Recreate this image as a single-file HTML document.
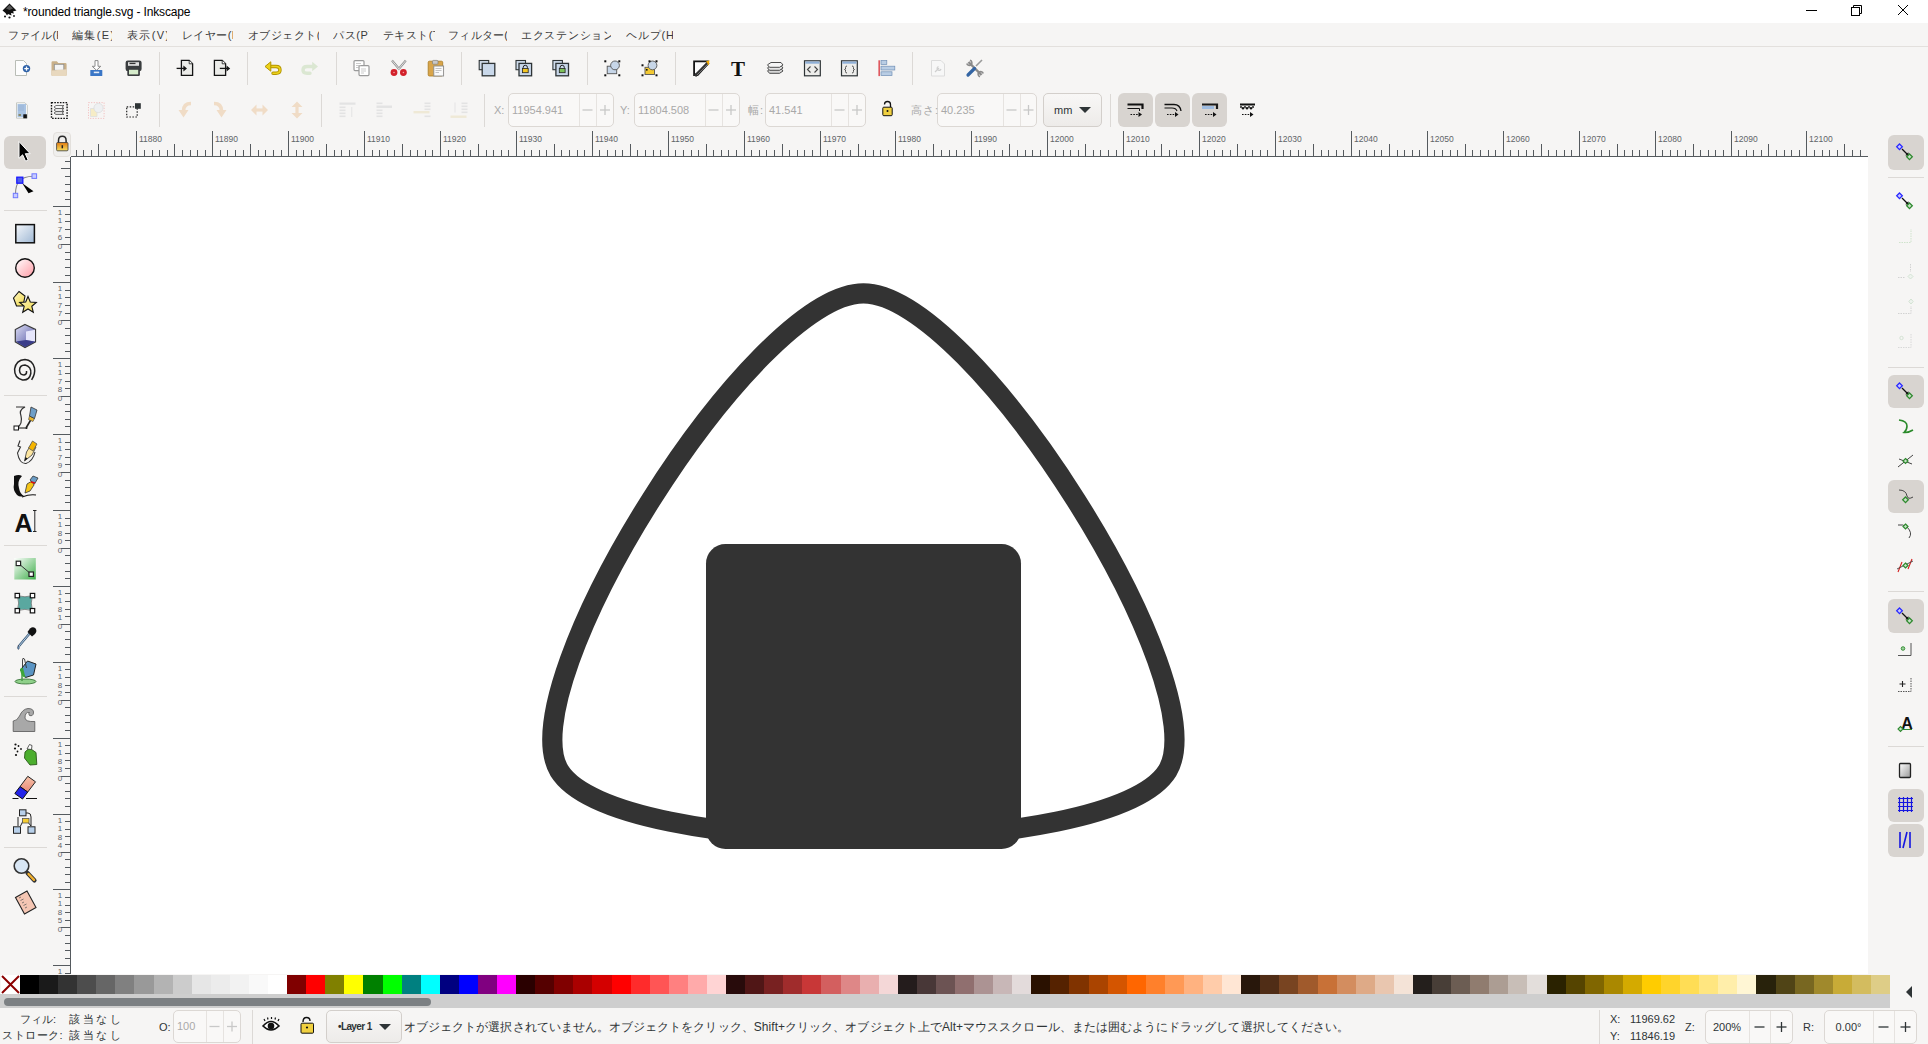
<!DOCTYPE html><html><head><meta charset="utf-8"><style>
*{margin:0;padding:0;box-sizing:border-box}
html,body{width:1928px;height:1044px;overflow:hidden;background:#f6f5f4;font-family:"Liberation Sans",sans-serif;color:#2e3436}
.a{position:absolute}
.sep{position:absolute;background:#dcd9d6}
.txt{position:absolute;white-space:nowrap;font-size:12px;line-height:14px}
.ent{position:absolute;border:1px solid #dcd8d4;border-radius:5px;background:#f9f8f7}
.btn{position:absolute;background:#d8d4d0;border-radius:6px}
svg{position:absolute;overflow:visible}
</style></head><body>

<div class="a" style="left:0;top:0;width:1928px;height:23px;background:#fff"></div>
<div class="txt" style="left:23px;top:5px;font-size:12px;letter-spacing:-0.15px;color:#000">*rounded triangle.svg - Inkscape</div>
<svg style="left:0;top:0" width="1928" height="23"><g stroke="#000" stroke-width="1" fill="none"><line x1="1806" y1="10.5" x2="1817" y2="10.5"/><rect x="1851.5" y="7.5" width="8" height="8"/><path d="M1853.5 7.5V5.5H1861.5V13.5H1859.5"/><path d="M1898 5L1908 15M1908 5L1898 15"/></g></svg>
<div class="a" style="left:0;top:46px;width:1928px;height:1px;background:#e3e0dd"></div>
<div class="txt" style="left:8px;top:28px;font-size:11px;letter-spacing:0.14px;color:#3a3a3a;overflow:hidden;width:50px">ファイル(F)</div>
<div class="txt" style="left:72px;top:28px;font-size:11px;letter-spacing:1.40px;color:#3a3a3a;overflow:hidden;width:40px">編集(E)</div>
<div class="txt" style="left:127px;top:28px;font-size:11px;letter-spacing:1.40px;color:#3a3a3a;overflow:hidden;width:40px">表示(V)</div>
<div class="txt" style="left:182px;top:28px;font-size:11px;letter-spacing:0.43px;color:#3a3a3a;overflow:hidden;width:51px">レイヤー(L)</div>
<div class="txt" style="left:248px;top:28px;font-size:11px;letter-spacing:0.44px;color:#3a3a3a;overflow:hidden;width:71px">オブジェクト(O)</div>
<div class="txt" style="left:333px;top:28px;font-size:11px;letter-spacing:0.60px;color:#3a3a3a;overflow:hidden;width:36px">パス(P)</div>
<div class="txt" style="left:383px;top:28px;font-size:11px;letter-spacing:0.43px;color:#3a3a3a;overflow:hidden;width:52px">テキスト(T)</div>
<div class="txt" style="left:448px;top:28px;font-size:11px;letter-spacing:0.25px;color:#3a3a3a;overflow:hidden;width:59px">フィルター(S)</div>
<div class="txt" style="left:521px;top:28px;font-size:11px;letter-spacing:0.73px;color:#3a3a3a;overflow:hidden;width:90px">エクステンション(N)</div>
<div class="txt" style="left:626px;top:28px;font-size:11px;letter-spacing:0.83px;color:#3a3a3a;overflow:hidden;width:47px">ヘルプ(H)</div>
<div class="sep" style="left:159px;top:52px;width:1px;height:33px"></div>
<div class="sep" style="left:247px;top:52px;width:1px;height:33px"></div>
<div class="sep" style="left:336px;top:52px;width:1px;height:33px"></div>
<div class="sep" style="left:461px;top:52px;width:1px;height:33px"></div>
<div class="sep" style="left:587px;top:52px;width:1px;height:33px"></div>
<div class="sep" style="left:675px;top:52px;width:1px;height:33px"></div>
<div class="sep" style="left:912px;top:52px;width:1px;height:33px"></div>
<div class="sep" style="left:159px;top:94px;width:1px;height:33px"></div>
<div class="sep" style="left:321px;top:94px;width:1px;height:33px"></div>
<div class="sep" style="left:484px;top:94px;width:1px;height:33px"></div>
<div class="sep" style="left:1110px;top:94px;width:1px;height:33px"></div>
<div class="ent" style="left:508px;top:93px;width:106px;height:34px"></div>
<div class="a" style="left:579px;top:94px;width:1px;height:32px;background:#e6e3e0"></div>
<div class="a" style="left:596px;top:94px;width:1px;height:32px;background:#e6e3e0"></div>
<div class="txt" style="left:512px;top:103px;font-size:11px;color:#a9a9a9">11954.941</div>
<svg style="left:0;top:0" width="1" height="1"><g stroke="#c8c8c8" stroke-width="1.3"><line x1="582.5" y1="110.0" x2="592.5" y2="110.0"/><line x1="600.0" y1="110.0" x2="610.0" y2="110.0"/><line x1="605.0" y1="105.0" x2="605.0" y2="115.0"/></g></svg>
<div class="ent" style="left:634px;top:93px;width:106px;height:34px"></div>
<div class="a" style="left:705px;top:94px;width:1px;height:32px;background:#e6e3e0"></div>
<div class="a" style="left:722px;top:94px;width:1px;height:32px;background:#e6e3e0"></div>
<div class="txt" style="left:638px;top:103px;font-size:11px;color:#a9a9a9">11804.508</div>
<svg style="left:0;top:0" width="1" height="1"><g stroke="#c8c8c8" stroke-width="1.3"><line x1="708.5" y1="110.0" x2="718.5" y2="110.0"/><line x1="726.0" y1="110.0" x2="736.0" y2="110.0"/><line x1="731.0" y1="105.0" x2="731.0" y2="115.0"/></g></svg>
<div class="ent" style="left:765px;top:93px;width:101px;height:34px"></div>
<div class="a" style="left:831px;top:94px;width:1px;height:32px;background:#e6e3e0"></div>
<div class="a" style="left:848px;top:94px;width:1px;height:32px;background:#e6e3e0"></div>
<div class="txt" style="left:769px;top:103px;font-size:11px;color:#a9a9a9">41.541</div>
<svg style="left:0;top:0" width="1" height="1"><g stroke="#c8c8c8" stroke-width="1.3"><line x1="834.5" y1="110.0" x2="844.5" y2="110.0"/><line x1="852.0" y1="110.0" x2="862.0" y2="110.0"/><line x1="857.0" y1="105.0" x2="857.0" y2="115.0"/></g></svg>
<div class="ent" style="left:937px;top:93px;width:100px;height:34px"></div>
<div class="a" style="left:1003px;top:94px;width:1px;height:32px;background:#e6e3e0"></div>
<div class="a" style="left:1020px;top:94px;width:1px;height:32px;background:#e6e3e0"></div>
<div class="txt" style="left:941px;top:103px;font-size:11px;color:#a9a9a9">40.235</div>
<svg style="left:0;top:0" width="1" height="1"><g stroke="#c8c8c8" stroke-width="1.3"><line x1="1006.5" y1="110.0" x2="1016.5" y2="110.0"/><line x1="1023.5" y1="110.0" x2="1033.5" y2="110.0"/><line x1="1028.5" y1="105.0" x2="1028.5" y2="115.0"/></g></svg>
<div class="txt" style="left:494px;top:103px;font-size:11px;color:#a9a9a9">X:</div>
<div class="txt" style="left:620px;top:103px;font-size:11px;color:#a9a9a9">Y:</div>
<div class="txt" style="left:748px;top:103px;font-size:11px;letter-spacing:1px;color:#a9a9a9">幅:</div>
<div class="txt" style="left:911px;top:103px;font-size:11px;letter-spacing:1px;color:#a9a9a9">高さ:</div>
<div class="a" style="left:1043px;top:93px;width:59px;height:34px;border:1px solid #d3cfcb;border-radius:5px;background:linear-gradient(#f8f7f6,#edebe9)"></div>
<div class="txt" style="left:1054px;top:103px;font-size:11px;color:#2e3436">mm</div>
<svg style="left:0;top:0" width="1" height="1"><path d="M1079 107H1091L1085 113Z" fill="#2e3436"/></svg>
<div class="btn" style="left:1118px;top:93px;width:35px;height:34px"></div>
<div class="btn" style="left:1155px;top:93px;width:35px;height:34px"></div>
<div class="btn" style="left:1192px;top:93px;width:35px;height:34px"></div>
<div class="a" style="left:71px;top:157px;width:1797px;height:817px;background:#fff"></div>
<svg style="left:0;top:0" width="1928" height="1044"><g stroke="#555a5e" stroke-width="1" shape-rendering="crispEdges"><line x1="71" y1="156.5" x2="1868" y2="156.5"/><line x1="70.5" y1="157" x2="70.5" y2="974"/><line x1="76.5" y1="150" x2="76.5" y2="157"/><line x1="83.5" y1="150" x2="83.5" y2="157"/><line x1="91.5" y1="150" x2="91.5" y2="157"/><line x1="98.5" y1="144" x2="98.5" y2="157"/><line x1="106.5" y1="150" x2="106.5" y2="157"/><line x1="114.5" y1="150" x2="114.5" y2="157"/><line x1="121.5" y1="150" x2="121.5" y2="157"/><line x1="129.5" y1="150" x2="129.5" y2="157"/><line x1="136.5" y1="131" x2="136.5" y2="157"/><line x1="144.5" y1="150" x2="144.5" y2="157"/><line x1="152.5" y1="150" x2="152.5" y2="157"/><line x1="159.5" y1="150" x2="159.5" y2="157"/><line x1="167.5" y1="150" x2="167.5" y2="157"/><line x1="174.5" y1="144" x2="174.5" y2="157"/><line x1="182.5" y1="150" x2="182.5" y2="157"/><line x1="190.5" y1="150" x2="190.5" y2="157"/><line x1="197.5" y1="150" x2="197.5" y2="157"/><line x1="205.5" y1="150" x2="205.5" y2="157"/><line x1="212.5" y1="131" x2="212.5" y2="157"/><line x1="220.5" y1="150" x2="220.5" y2="157"/><line x1="227.5" y1="150" x2="227.5" y2="157"/><line x1="235.5" y1="150" x2="235.5" y2="157"/><line x1="243.5" y1="150" x2="243.5" y2="157"/><line x1="250.5" y1="144" x2="250.5" y2="157"/><line x1="258.5" y1="150" x2="258.5" y2="157"/><line x1="265.5" y1="150" x2="265.5" y2="157"/><line x1="273.5" y1="150" x2="273.5" y2="157"/><line x1="281.5" y1="150" x2="281.5" y2="157"/><line x1="288.5" y1="131" x2="288.5" y2="157"/><line x1="296.5" y1="150" x2="296.5" y2="157"/><line x1="303.5" y1="150" x2="303.5" y2="157"/><line x1="311.5" y1="150" x2="311.5" y2="157"/><line x1="319.5" y1="150" x2="319.5" y2="157"/><line x1="326.5" y1="144" x2="326.5" y2="157"/><line x1="334.5" y1="150" x2="334.5" y2="157"/><line x1="341.5" y1="150" x2="341.5" y2="157"/><line x1="349.5" y1="150" x2="349.5" y2="157"/><line x1="357.5" y1="150" x2="357.5" y2="157"/><line x1="364.5" y1="131" x2="364.5" y2="157"/><line x1="372.5" y1="150" x2="372.5" y2="157"/><line x1="379.5" y1="150" x2="379.5" y2="157"/><line x1="387.5" y1="150" x2="387.5" y2="157"/><line x1="394.5" y1="150" x2="394.5" y2="157"/><line x1="402.5" y1="144" x2="402.5" y2="157"/><line x1="410.5" y1="150" x2="410.5" y2="157"/><line x1="417.5" y1="150" x2="417.5" y2="157"/><line x1="425.5" y1="150" x2="425.5" y2="157"/><line x1="432.5" y1="150" x2="432.5" y2="157"/><line x1="440.5" y1="131" x2="440.5" y2="157"/><line x1="448.5" y1="150" x2="448.5" y2="157"/><line x1="455.5" y1="150" x2="455.5" y2="157"/><line x1="463.5" y1="150" x2="463.5" y2="157"/><line x1="470.5" y1="150" x2="470.5" y2="157"/><line x1="478.5" y1="144" x2="478.5" y2="157"/><line x1="486.5" y1="150" x2="486.5" y2="157"/><line x1="493.5" y1="150" x2="493.5" y2="157"/><line x1="501.5" y1="150" x2="501.5" y2="157"/><line x1="508.5" y1="150" x2="508.5" y2="157"/><line x1="516.5" y1="131" x2="516.5" y2="157"/><line x1="524.5" y1="150" x2="524.5" y2="157"/><line x1="531.5" y1="150" x2="531.5" y2="157"/><line x1="539.5" y1="150" x2="539.5" y2="157"/><line x1="546.5" y1="150" x2="546.5" y2="157"/><line x1="554.5" y1="144" x2="554.5" y2="157"/><line x1="561.5" y1="150" x2="561.5" y2="157"/><line x1="569.5" y1="150" x2="569.5" y2="157"/><line x1="577.5" y1="150" x2="577.5" y2="157"/><line x1="584.5" y1="150" x2="584.5" y2="157"/><line x1="592.5" y1="131" x2="592.5" y2="157"/><line x1="599.5" y1="150" x2="599.5" y2="157"/><line x1="607.5" y1="150" x2="607.5" y2="157"/><line x1="615.5" y1="150" x2="615.5" y2="157"/><line x1="622.5" y1="150" x2="622.5" y2="157"/><line x1="630.5" y1="144" x2="630.5" y2="157"/><line x1="637.5" y1="150" x2="637.5" y2="157"/><line x1="645.5" y1="150" x2="645.5" y2="157"/><line x1="653.5" y1="150" x2="653.5" y2="157"/><line x1="660.5" y1="150" x2="660.5" y2="157"/><line x1="668.5" y1="131" x2="668.5" y2="157"/><line x1="675.5" y1="150" x2="675.5" y2="157"/><line x1="683.5" y1="150" x2="683.5" y2="157"/><line x1="691.5" y1="150" x2="691.5" y2="157"/><line x1="698.5" y1="150" x2="698.5" y2="157"/><line x1="706.5" y1="144" x2="706.5" y2="157"/><line x1="713.5" y1="150" x2="713.5" y2="157"/><line x1="721.5" y1="150" x2="721.5" y2="157"/><line x1="728.5" y1="150" x2="728.5" y2="157"/><line x1="736.5" y1="150" x2="736.5" y2="157"/><line x1="744.5" y1="131" x2="744.5" y2="157"/><line x1="751.5" y1="150" x2="751.5" y2="157"/><line x1="759.5" y1="150" x2="759.5" y2="157"/><line x1="766.5" y1="150" x2="766.5" y2="157"/><line x1="774.5" y1="150" x2="774.5" y2="157"/><line x1="782.5" y1="144" x2="782.5" y2="157"/><line x1="789.5" y1="150" x2="789.5" y2="157"/><line x1="797.5" y1="150" x2="797.5" y2="157"/><line x1="804.5" y1="150" x2="804.5" y2="157"/><line x1="812.5" y1="150" x2="812.5" y2="157"/><line x1="820.5" y1="131" x2="820.5" y2="157"/><line x1="827.5" y1="150" x2="827.5" y2="157"/><line x1="835.5" y1="150" x2="835.5" y2="157"/><line x1="842.5" y1="150" x2="842.5" y2="157"/><line x1="850.5" y1="150" x2="850.5" y2="157"/><line x1="858.5" y1="144" x2="858.5" y2="157"/><line x1="865.5" y1="150" x2="865.5" y2="157"/><line x1="873.5" y1="150" x2="873.5" y2="157"/><line x1="880.5" y1="150" x2="880.5" y2="157"/><line x1="888.5" y1="150" x2="888.5" y2="157"/><line x1="895.5" y1="131" x2="895.5" y2="157"/><line x1="903.5" y1="150" x2="903.5" y2="157"/><line x1="911.5" y1="150" x2="911.5" y2="157"/><line x1="918.5" y1="150" x2="918.5" y2="157"/><line x1="926.5" y1="150" x2="926.5" y2="157"/><line x1="933.5" y1="144" x2="933.5" y2="157"/><line x1="941.5" y1="150" x2="941.5" y2="157"/><line x1="949.5" y1="150" x2="949.5" y2="157"/><line x1="956.5" y1="150" x2="956.5" y2="157"/><line x1="964.5" y1="150" x2="964.5" y2="157"/><line x1="971.5" y1="131" x2="971.5" y2="157"/><line x1="979.5" y1="150" x2="979.5" y2="157"/><line x1="987.5" y1="150" x2="987.5" y2="157"/><line x1="994.5" y1="150" x2="994.5" y2="157"/><line x1="1002.5" y1="150" x2="1002.5" y2="157"/><line x1="1009.5" y1="144" x2="1009.5" y2="157"/><line x1="1017.5" y1="150" x2="1017.5" y2="157"/><line x1="1025.5" y1="150" x2="1025.5" y2="157"/><line x1="1032.5" y1="150" x2="1032.5" y2="157"/><line x1="1040.5" y1="150" x2="1040.5" y2="157"/><line x1="1047.5" y1="131" x2="1047.5" y2="157"/><line x1="1055.5" y1="150" x2="1055.5" y2="157"/><line x1="1063.5" y1="150" x2="1063.5" y2="157"/><line x1="1070.5" y1="150" x2="1070.5" y2="157"/><line x1="1078.5" y1="150" x2="1078.5" y2="157"/><line x1="1085.5" y1="144" x2="1085.5" y2="157"/><line x1="1093.5" y1="150" x2="1093.5" y2="157"/><line x1="1100.5" y1="150" x2="1100.5" y2="157"/><line x1="1108.5" y1="150" x2="1108.5" y2="157"/><line x1="1116.5" y1="150" x2="1116.5" y2="157"/><line x1="1123.5" y1="131" x2="1123.5" y2="157"/><line x1="1131.5" y1="150" x2="1131.5" y2="157"/><line x1="1138.5" y1="150" x2="1138.5" y2="157"/><line x1="1146.5" y1="150" x2="1146.5" y2="157"/><line x1="1154.5" y1="150" x2="1154.5" y2="157"/><line x1="1161.5" y1="144" x2="1161.5" y2="157"/><line x1="1169.5" y1="150" x2="1169.5" y2="157"/><line x1="1176.5" y1="150" x2="1176.5" y2="157"/><line x1="1184.5" y1="150" x2="1184.5" y2="157"/><line x1="1192.5" y1="150" x2="1192.5" y2="157"/><line x1="1199.5" y1="131" x2="1199.5" y2="157"/><line x1="1207.5" y1="150" x2="1207.5" y2="157"/><line x1="1214.5" y1="150" x2="1214.5" y2="157"/><line x1="1222.5" y1="150" x2="1222.5" y2="157"/><line x1="1230.5" y1="150" x2="1230.5" y2="157"/><line x1="1237.5" y1="144" x2="1237.5" y2="157"/><line x1="1245.5" y1="150" x2="1245.5" y2="157"/><line x1="1252.5" y1="150" x2="1252.5" y2="157"/><line x1="1260.5" y1="150" x2="1260.5" y2="157"/><line x1="1267.5" y1="150" x2="1267.5" y2="157"/><line x1="1275.5" y1="131" x2="1275.5" y2="157"/><line x1="1283.5" y1="150" x2="1283.5" y2="157"/><line x1="1290.5" y1="150" x2="1290.5" y2="157"/><line x1="1298.5" y1="150" x2="1298.5" y2="157"/><line x1="1305.5" y1="150" x2="1305.5" y2="157"/><line x1="1313.5" y1="144" x2="1313.5" y2="157"/><line x1="1321.5" y1="150" x2="1321.5" y2="157"/><line x1="1328.5" y1="150" x2="1328.5" y2="157"/><line x1="1336.5" y1="150" x2="1336.5" y2="157"/><line x1="1343.5" y1="150" x2="1343.5" y2="157"/><line x1="1351.5" y1="131" x2="1351.5" y2="157"/><line x1="1359.5" y1="150" x2="1359.5" y2="157"/><line x1="1366.5" y1="150" x2="1366.5" y2="157"/><line x1="1374.5" y1="150" x2="1374.5" y2="157"/><line x1="1381.5" y1="150" x2="1381.5" y2="157"/><line x1="1389.5" y1="144" x2="1389.5" y2="157"/><line x1="1397.5" y1="150" x2="1397.5" y2="157"/><line x1="1404.5" y1="150" x2="1404.5" y2="157"/><line x1="1412.5" y1="150" x2="1412.5" y2="157"/><line x1="1419.5" y1="150" x2="1419.5" y2="157"/><line x1="1427.5" y1="131" x2="1427.5" y2="157"/><line x1="1434.5" y1="150" x2="1434.5" y2="157"/><line x1="1442.5" y1="150" x2="1442.5" y2="157"/><line x1="1450.5" y1="150" x2="1450.5" y2="157"/><line x1="1457.5" y1="150" x2="1457.5" y2="157"/><line x1="1465.5" y1="144" x2="1465.5" y2="157"/><line x1="1472.5" y1="150" x2="1472.5" y2="157"/><line x1="1480.5" y1="150" x2="1480.5" y2="157"/><line x1="1488.5" y1="150" x2="1488.5" y2="157"/><line x1="1495.5" y1="150" x2="1495.5" y2="157"/><line x1="1503.5" y1="131" x2="1503.5" y2="157"/><line x1="1510.5" y1="150" x2="1510.5" y2="157"/><line x1="1518.5" y1="150" x2="1518.5" y2="157"/><line x1="1526.5" y1="150" x2="1526.5" y2="157"/><line x1="1533.5" y1="150" x2="1533.5" y2="157"/><line x1="1541.5" y1="144" x2="1541.5" y2="157"/><line x1="1548.5" y1="150" x2="1548.5" y2="157"/><line x1="1556.5" y1="150" x2="1556.5" y2="157"/><line x1="1564.5" y1="150" x2="1564.5" y2="157"/><line x1="1571.5" y1="150" x2="1571.5" y2="157"/><line x1="1579.5" y1="131" x2="1579.5" y2="157"/><line x1="1586.5" y1="150" x2="1586.5" y2="157"/><line x1="1594.5" y1="150" x2="1594.5" y2="157"/><line x1="1601.5" y1="150" x2="1601.5" y2="157"/><line x1="1609.5" y1="150" x2="1609.5" y2="157"/><line x1="1617.5" y1="144" x2="1617.5" y2="157"/><line x1="1624.5" y1="150" x2="1624.5" y2="157"/><line x1="1632.5" y1="150" x2="1632.5" y2="157"/><line x1="1639.5" y1="150" x2="1639.5" y2="157"/><line x1="1647.5" y1="150" x2="1647.5" y2="157"/><line x1="1655.5" y1="131" x2="1655.5" y2="157"/><line x1="1662.5" y1="150" x2="1662.5" y2="157"/><line x1="1670.5" y1="150" x2="1670.5" y2="157"/><line x1="1677.5" y1="150" x2="1677.5" y2="157"/><line x1="1685.5" y1="150" x2="1685.5" y2="157"/><line x1="1693.5" y1="144" x2="1693.5" y2="157"/><line x1="1700.5" y1="150" x2="1700.5" y2="157"/><line x1="1708.5" y1="150" x2="1708.5" y2="157"/><line x1="1715.5" y1="150" x2="1715.5" y2="157"/><line x1="1723.5" y1="150" x2="1723.5" y2="157"/><line x1="1731.5" y1="131" x2="1731.5" y2="157"/><line x1="1738.5" y1="150" x2="1738.5" y2="157"/><line x1="1746.5" y1="150" x2="1746.5" y2="157"/><line x1="1753.5" y1="150" x2="1753.5" y2="157"/><line x1="1761.5" y1="150" x2="1761.5" y2="157"/><line x1="1768.5" y1="144" x2="1768.5" y2="157"/><line x1="1776.5" y1="150" x2="1776.5" y2="157"/><line x1="1784.5" y1="150" x2="1784.5" y2="157"/><line x1="1791.5" y1="150" x2="1791.5" y2="157"/><line x1="1799.5" y1="150" x2="1799.5" y2="157"/><line x1="1806.5" y1="131" x2="1806.5" y2="157"/><line x1="1814.5" y1="150" x2="1814.5" y2="157"/><line x1="1822.5" y1="150" x2="1822.5" y2="157"/><line x1="1829.5" y1="150" x2="1829.5" y2="157"/><line x1="1837.5" y1="150" x2="1837.5" y2="157"/><line x1="1844.5" y1="144" x2="1844.5" y2="157"/><line x1="1852.5" y1="150" x2="1852.5" y2="157"/><line x1="1860.5" y1="150" x2="1860.5" y2="157"/><line x1="65" y1="161.5" x2="71" y2="161.5"/><line x1="61" y1="168.5" x2="71" y2="168.5"/><line x1="65" y1="176.5" x2="71" y2="176.5"/><line x1="65" y1="184.5" x2="71" y2="184.5"/><line x1="65" y1="191.5" x2="71" y2="191.5"/><line x1="65" y1="199.5" x2="71" y2="199.5"/><line x1="53" y1="206.5" x2="71" y2="206.5"/><line x1="65" y1="214.5" x2="71" y2="214.5"/><line x1="65" y1="221.5" x2="71" y2="221.5"/><line x1="65" y1="229.5" x2="71" y2="229.5"/><line x1="65" y1="237.5" x2="71" y2="237.5"/><line x1="61" y1="244.5" x2="71" y2="244.5"/><line x1="65" y1="252.5" x2="71" y2="252.5"/><line x1="65" y1="259.5" x2="71" y2="259.5"/><line x1="65" y1="267.5" x2="71" y2="267.5"/><line x1="65" y1="275.5" x2="71" y2="275.5"/><line x1="53" y1="282.5" x2="71" y2="282.5"/><line x1="65" y1="290.5" x2="71" y2="290.5"/><line x1="65" y1="297.5" x2="71" y2="297.5"/><line x1="65" y1="305.5" x2="71" y2="305.5"/><line x1="65" y1="313.5" x2="71" y2="313.5"/><line x1="61" y1="320.5" x2="71" y2="320.5"/><line x1="65" y1="328.5" x2="71" y2="328.5"/><line x1="65" y1="335.5" x2="71" y2="335.5"/><line x1="65" y1="343.5" x2="71" y2="343.5"/><line x1="65" y1="351.5" x2="71" y2="351.5"/><line x1="53" y1="358.5" x2="71" y2="358.5"/><line x1="65" y1="366.5" x2="71" y2="366.5"/><line x1="65" y1="373.5" x2="71" y2="373.5"/><line x1="65" y1="381.5" x2="71" y2="381.5"/><line x1="65" y1="388.5" x2="71" y2="388.5"/><line x1="61" y1="396.5" x2="71" y2="396.5"/><line x1="65" y1="404.5" x2="71" y2="404.5"/><line x1="65" y1="411.5" x2="71" y2="411.5"/><line x1="65" y1="419.5" x2="71" y2="419.5"/><line x1="65" y1="426.5" x2="71" y2="426.5"/><line x1="53" y1="434.5" x2="71" y2="434.5"/><line x1="65" y1="442.5" x2="71" y2="442.5"/><line x1="65" y1="449.5" x2="71" y2="449.5"/><line x1="65" y1="457.5" x2="71" y2="457.5"/><line x1="65" y1="464.5" x2="71" y2="464.5"/><line x1="61" y1="472.5" x2="71" y2="472.5"/><line x1="65" y1="480.5" x2="71" y2="480.5"/><line x1="65" y1="487.5" x2="71" y2="487.5"/><line x1="65" y1="495.5" x2="71" y2="495.5"/><line x1="65" y1="502.5" x2="71" y2="502.5"/><line x1="53" y1="510.5" x2="71" y2="510.5"/><line x1="65" y1="518.5" x2="71" y2="518.5"/><line x1="65" y1="525.5" x2="71" y2="525.5"/><line x1="65" y1="533.5" x2="71" y2="533.5"/><line x1="65" y1="540.5" x2="71" y2="540.5"/><line x1="61" y1="548.5" x2="71" y2="548.5"/><line x1="65" y1="555.5" x2="71" y2="555.5"/><line x1="65" y1="563.5" x2="71" y2="563.5"/><line x1="65" y1="571.5" x2="71" y2="571.5"/><line x1="65" y1="578.5" x2="71" y2="578.5"/><line x1="53" y1="586.5" x2="71" y2="586.5"/><line x1="65" y1="593.5" x2="71" y2="593.5"/><line x1="65" y1="601.5" x2="71" y2="601.5"/><line x1="65" y1="609.5" x2="71" y2="609.5"/><line x1="65" y1="616.5" x2="71" y2="616.5"/><line x1="61" y1="624.5" x2="71" y2="624.5"/><line x1="65" y1="631.5" x2="71" y2="631.5"/><line x1="65" y1="639.5" x2="71" y2="639.5"/><line x1="65" y1="647.5" x2="71" y2="647.5"/><line x1="65" y1="654.5" x2="71" y2="654.5"/><line x1="53" y1="662.5" x2="71" y2="662.5"/><line x1="65" y1="669.5" x2="71" y2="669.5"/><line x1="65" y1="677.5" x2="71" y2="677.5"/><line x1="65" y1="685.5" x2="71" y2="685.5"/><line x1="65" y1="692.5" x2="71" y2="692.5"/><line x1="61" y1="700.5" x2="71" y2="700.5"/><line x1="65" y1="707.5" x2="71" y2="707.5"/><line x1="65" y1="715.5" x2="71" y2="715.5"/><line x1="65" y1="722.5" x2="71" y2="722.5"/><line x1="65" y1="730.5" x2="71" y2="730.5"/><line x1="53" y1="738.5" x2="71" y2="738.5"/><line x1="65" y1="745.5" x2="71" y2="745.5"/><line x1="65" y1="753.5" x2="71" y2="753.5"/><line x1="65" y1="760.5" x2="71" y2="760.5"/><line x1="65" y1="768.5" x2="71" y2="768.5"/><line x1="61" y1="776.5" x2="71" y2="776.5"/><line x1="65" y1="783.5" x2="71" y2="783.5"/><line x1="65" y1="791.5" x2="71" y2="791.5"/><line x1="65" y1="798.5" x2="71" y2="798.5"/><line x1="65" y1="806.5" x2="71" y2="806.5"/><line x1="53" y1="814.5" x2="71" y2="814.5"/><line x1="65" y1="821.5" x2="71" y2="821.5"/><line x1="65" y1="829.5" x2="71" y2="829.5"/><line x1="65" y1="836.5" x2="71" y2="836.5"/><line x1="65" y1="844.5" x2="71" y2="844.5"/><line x1="61" y1="852.5" x2="71" y2="852.5"/><line x1="65" y1="859.5" x2="71" y2="859.5"/><line x1="65" y1="867.5" x2="71" y2="867.5"/><line x1="65" y1="874.5" x2="71" y2="874.5"/><line x1="65" y1="882.5" x2="71" y2="882.5"/><line x1="53" y1="889.5" x2="71" y2="889.5"/><line x1="65" y1="897.5" x2="71" y2="897.5"/><line x1="65" y1="905.5" x2="71" y2="905.5"/><line x1="65" y1="912.5" x2="71" y2="912.5"/><line x1="65" y1="920.5" x2="71" y2="920.5"/><line x1="61" y1="927.5" x2="71" y2="927.5"/><line x1="65" y1="935.5" x2="71" y2="935.5"/><line x1="65" y1="943.5" x2="71" y2="943.5"/><line x1="65" y1="950.5" x2="71" y2="950.5"/><line x1="65" y1="958.5" x2="71" y2="958.5"/><line x1="53" y1="965.5" x2="71" y2="965.5"/><line x1="65" y1="973.5" x2="71" y2="973.5"/></g><defs><clipPath id="lrc"><rect x="0" y="158" width="80" height="816"/></clipPath></defs><g font-family="Liberation Sans" font-size="8.5" fill="#5f6468"><text x="139.0" y="141.5">11880</text><text x="215.0" y="141.5">11890</text><text x="291.0" y="141.5">11900</text><text x="367.0" y="141.5">11910</text><text x="443.0" y="141.5">11920</text><text x="519.0" y="141.5">11930</text><text x="595.0" y="141.5">11940</text><text x="671.0" y="141.5">11950</text><text x="747.0" y="141.5">11960</text><text x="823.0" y="141.5">11970</text><text x="898.0" y="141.5">11980</text><text x="974.0" y="141.5">11990</text><text x="1050.0" y="141.5">12000</text><text x="1126.0" y="141.5">12010</text><text x="1202.0" y="141.5">12020</text><text x="1278.0" y="141.5">12030</text><text x="1354.0" y="141.5">12040</text><text x="1430.0" y="141.5">12050</text><text x="1506.0" y="141.5">12060</text><text x="1582.0" y="141.5">12070</text><text x="1658.0" y="141.5">12080</text><text x="1734.0" y="141.5">12090</text><text x="1809.0" y="141.5">12100</text></g><g font-family="Liberation Sans" font-size="8.5" fill="#5f6468" clip-path="url(#lrc)"><text x="60" y="214.5" text-anchor="middle" font-size="8">1</text><text x="60" y="223.1" text-anchor="middle" font-size="8">1</text><text x="60" y="231.7" text-anchor="middle" font-size="8">7</text><text x="60" y="240.3" text-anchor="middle" font-size="8">6</text><text x="60" y="248.9" text-anchor="middle" font-size="8">0</text><text x="60" y="290.5" text-anchor="middle" font-size="8">1</text><text x="60" y="299.1" text-anchor="middle" font-size="8">1</text><text x="60" y="307.7" text-anchor="middle" font-size="8">7</text><text x="60" y="316.3" text-anchor="middle" font-size="8">7</text><text x="60" y="324.9" text-anchor="middle" font-size="8">0</text><text x="60" y="366.5" text-anchor="middle" font-size="8">1</text><text x="60" y="375.1" text-anchor="middle" font-size="8">1</text><text x="60" y="383.7" text-anchor="middle" font-size="8">7</text><text x="60" y="392.3" text-anchor="middle" font-size="8">8</text><text x="60" y="400.9" text-anchor="middle" font-size="8">0</text><text x="60" y="442.5" text-anchor="middle" font-size="8">1</text><text x="60" y="451.1" text-anchor="middle" font-size="8">1</text><text x="60" y="459.7" text-anchor="middle" font-size="8">7</text><text x="60" y="468.3" text-anchor="middle" font-size="8">9</text><text x="60" y="476.9" text-anchor="middle" font-size="8">0</text><text x="60" y="518.5" text-anchor="middle" font-size="8">1</text><text x="60" y="527.1" text-anchor="middle" font-size="8">1</text><text x="60" y="535.7" text-anchor="middle" font-size="8">8</text><text x="60" y="544.3" text-anchor="middle" font-size="8">0</text><text x="60" y="552.9" text-anchor="middle" font-size="8">0</text><text x="60" y="594.5" text-anchor="middle" font-size="8">1</text><text x="60" y="603.1" text-anchor="middle" font-size="8">1</text><text x="60" y="611.7" text-anchor="middle" font-size="8">8</text><text x="60" y="620.3" text-anchor="middle" font-size="8">1</text><text x="60" y="628.9" text-anchor="middle" font-size="8">0</text><text x="60" y="670.5" text-anchor="middle" font-size="8">1</text><text x="60" y="679.1" text-anchor="middle" font-size="8">1</text><text x="60" y="687.7" text-anchor="middle" font-size="8">8</text><text x="60" y="696.3" text-anchor="middle" font-size="8">2</text><text x="60" y="704.9" text-anchor="middle" font-size="8">0</text><text x="60" y="746.5" text-anchor="middle" font-size="8">1</text><text x="60" y="755.1" text-anchor="middle" font-size="8">1</text><text x="60" y="763.7" text-anchor="middle" font-size="8">8</text><text x="60" y="772.3" text-anchor="middle" font-size="8">3</text><text x="60" y="780.9" text-anchor="middle" font-size="8">0</text><text x="60" y="822.5" text-anchor="middle" font-size="8">1</text><text x="60" y="831.1" text-anchor="middle" font-size="8">1</text><text x="60" y="839.7" text-anchor="middle" font-size="8">8</text><text x="60" y="848.3" text-anchor="middle" font-size="8">4</text><text x="60" y="856.9" text-anchor="middle" font-size="8">0</text><text x="60" y="897.5" text-anchor="middle" font-size="8">1</text><text x="60" y="906.1" text-anchor="middle" font-size="8">1</text><text x="60" y="914.7" text-anchor="middle" font-size="8">8</text><text x="60" y="923.3" text-anchor="middle" font-size="8">5</text><text x="60" y="931.9" text-anchor="middle" font-size="8">0</text><text x="60" y="973.5" text-anchor="middle" font-size="8">1</text><text x="60" y="982.1" text-anchor="middle" font-size="8">1</text><text x="60" y="990.7" text-anchor="middle" font-size="8">8</text><text x="60" y="999.3" text-anchor="middle" font-size="8">6</text><text x="60" y="1007.9" text-anchor="middle" font-size="8">0</text></g></svg>
<svg style="left:0;top:0" width="1928" height="1044"><path d="M863.4 293.36C753.44 293.36 508.04 685.43 559.28 770.77C614.96 861.2 1111.84 861.2 1167.52 770.77C1218.76 685.43 973.36 293.36 863.4 293.36Z" fill="none" stroke="#333" stroke-width="20.2"/><rect x="706" y="544" width="315" height="305" rx="19.5" fill="#333"/></svg>
<div class="btn" style="left:4px;top:136px;width:42px;height:33px"></div>
<div class="sep" style="left:4px;top:210px;width:43px;height:1px"></div>
<div class="sep" style="left:4px;top:395px;width:43px;height:1px"></div>
<div class="sep" style="left:4px;top:545px;width:43px;height:1px"></div>
<div class="sep" style="left:4px;top:696px;width:43px;height:1px"></div>
<div class="sep" style="left:4px;top:847px;width:43px;height:1px"></div>
<div class="a" style="left:53px;top:132px;width:18px;height:25px;border:1px solid #e3e0dc;border-radius:4px;background:#f0efed"></div>
<div class="btn" style="left:1888px;top:135px;width:36px;height:35px"></div>
<div class="btn" style="left:1888px;top:375px;width:36px;height:33px"></div>
<div class="btn" style="left:1888px;top:480px;width:36px;height:33px"></div>
<div class="btn" style="left:1888px;top:599px;width:36px;height:34px"></div>
<div class="btn" style="left:1888px;top:789px;width:36px;height:33px"></div>
<div class="btn" style="left:1888px;top:824px;width:36px;height:33px"></div>
<div class="sep" style="left:1888px;top:177px;width:36px;height:1px"></div>
<div class="sep" style="left:1888px;top:367px;width:36px;height:1px"></div>
<div class="sep" style="left:1888px;top:591px;width:36px;height:1px"></div>
<div class="sep" style="left:1888px;top:746px;width:36px;height:1px"></div>
<svg style="left:0;top:0" width="1928" height="1044" shape-rendering="crispEdges"><rect x="1" y="975" width="19" height="19" fill="#fff"/><path d="M2 976L19 993M19 976L2 993" stroke="#8b0000" stroke-width="2" shape-rendering="auto"/><rect x="20" y="975" width="19" height="19" fill="#000000"/><rect x="39" y="975" width="19" height="19" fill="#1a1a1a"/><rect x="58" y="975" width="19" height="19" fill="#333333"/><rect x="77" y="975" width="19" height="19" fill="#4d4d4d"/><rect x="96" y="975" width="19" height="19" fill="#666666"/><rect x="115" y="975" width="19" height="19" fill="#808080"/><rect x="134" y="975" width="20" height="19" fill="#999999"/><rect x="154" y="975" width="19" height="19" fill="#b3b3b3"/><rect x="173" y="975" width="19" height="19" fill="#cccccc"/><rect x="192" y="975" width="19" height="19" fill="#e6e6e6"/><rect x="211" y="975" width="19" height="19" fill="#ececec"/><rect x="230" y="975" width="19" height="19" fill="#f2f2f2"/><rect x="249" y="975" width="19" height="19" fill="#f9f9f9"/><rect x="268" y="975" width="19" height="19" fill="#ffffff"/><rect x="287" y="975" width="19" height="19" fill="#800000"/><rect x="306" y="975" width="19" height="19" fill="#ff0000"/><rect x="325" y="975" width="19" height="19" fill="#808000"/><rect x="344" y="975" width="19" height="19" fill="#ffff00"/><rect x="363" y="975" width="20" height="19" fill="#008000"/><rect x="383" y="975" width="19" height="19" fill="#00ff00"/><rect x="402" y="975" width="19" height="19" fill="#008080"/><rect x="421" y="975" width="19" height="19" fill="#00ffff"/><rect x="440" y="975" width="19" height="19" fill="#000080"/><rect x="459" y="975" width="19" height="19" fill="#0000ff"/><rect x="478" y="975" width="19" height="19" fill="#800080"/><rect x="497" y="975" width="19" height="19" fill="#ff00ff"/><rect x="516" y="975" width="19" height="19" fill="#2a0000"/><rect x="535" y="975" width="19" height="19" fill="#550000"/><rect x="554" y="975" width="19" height="19" fill="#800000"/><rect x="573" y="975" width="19" height="19" fill="#aa0000"/><rect x="592" y="975" width="20" height="19" fill="#d40000"/><rect x="612" y="975" width="19" height="19" fill="#ff0000"/><rect x="631" y="975" width="19" height="19" fill="#ff2b2b"/><rect x="650" y="975" width="19" height="19" fill="#ff5555"/><rect x="669" y="975" width="19" height="19" fill="#ff8080"/><rect x="688" y="975" width="19" height="19" fill="#ffaaaa"/><rect x="707" y="975" width="19" height="19" fill="#ffd4d4"/><rect x="726" y="975" width="19" height="19" fill="#280b0b"/><rect x="745" y="975" width="19" height="19" fill="#501616"/><rect x="764" y="975" width="19" height="19" fill="#782121"/><rect x="783" y="975" width="19" height="19" fill="#a02c2c"/><rect x="802" y="975" width="19" height="19" fill="#c83737"/><rect x="821" y="975" width="20" height="19" fill="#d35f5f"/><rect x="841" y="975" width="19" height="19" fill="#de8787"/><rect x="860" y="975" width="19" height="19" fill="#e9afaf"/><rect x="879" y="975" width="19" height="19" fill="#f4d7d7"/><rect x="898" y="975" width="19" height="19" fill="#241c1c"/><rect x="917" y="975" width="19" height="19" fill="#483737"/><rect x="936" y="975" width="19" height="19" fill="#6c5353"/><rect x="955" y="975" width="19" height="19" fill="#906f6f"/><rect x="974" y="975" width="19" height="19" fill="#ac9393"/><rect x="993" y="975" width="19" height="19" fill="#c8b7b7"/><rect x="1012" y="975" width="19" height="19" fill="#e3dbdb"/><rect x="1031" y="975" width="19" height="19" fill="#2a1100"/><rect x="1050" y="975" width="19" height="19" fill="#552200"/><rect x="1069" y="975" width="20" height="19" fill="#803300"/><rect x="1089" y="975" width="19" height="19" fill="#aa4400"/><rect x="1108" y="975" width="19" height="19" fill="#d45500"/><rect x="1127" y="975" width="19" height="19" fill="#ff6600"/><rect x="1146" y="975" width="19" height="19" fill="#ff802b"/><rect x="1165" y="975" width="19" height="19" fill="#ff9955"/><rect x="1184" y="975" width="19" height="19" fill="#ffb280"/><rect x="1203" y="975" width="19" height="19" fill="#ffccaa"/><rect x="1222" y="975" width="19" height="19" fill="#ffe6d4"/><rect x="1241" y="975" width="19" height="19" fill="#28170b"/><rect x="1260" y="975" width="19" height="19" fill="#502d16"/><rect x="1279" y="975" width="19" height="19" fill="#784421"/><rect x="1298" y="975" width="20" height="19" fill="#a05a2c"/><rect x="1318" y="975" width="19" height="19" fill="#c87137"/><rect x="1337" y="975" width="19" height="19" fill="#d38d5f"/><rect x="1356" y="975" width="19" height="19" fill="#deaa87"/><rect x="1375" y="975" width="19" height="19" fill="#e9c6af"/><rect x="1394" y="975" width="19" height="19" fill="#f4e3d7"/><rect x="1413" y="975" width="19" height="19" fill="#241f1c"/><rect x="1432" y="975" width="19" height="19" fill="#483e37"/><rect x="1451" y="975" width="19" height="19" fill="#6c5d53"/><rect x="1470" y="975" width="19" height="19" fill="#907c6f"/><rect x="1489" y="975" width="19" height="19" fill="#ac9d93"/><rect x="1508" y="975" width="19" height="19" fill="#c8beb7"/><rect x="1527" y="975" width="20" height="19" fill="#e3dedb"/><rect x="1547" y="975" width="19" height="19" fill="#2a2200"/><rect x="1566" y="975" width="19" height="19" fill="#554400"/><rect x="1585" y="975" width="19" height="19" fill="#806600"/><rect x="1604" y="975" width="19" height="19" fill="#aa8800"/><rect x="1623" y="975" width="19" height="19" fill="#d4aa00"/><rect x="1642" y="975" width="19" height="19" fill="#ffcc00"/><rect x="1661" y="975" width="19" height="19" fill="#ffd42b"/><rect x="1680" y="975" width="19" height="19" fill="#ffdd55"/><rect x="1699" y="975" width="19" height="19" fill="#ffe680"/><rect x="1718" y="975" width="19" height="19" fill="#ffeeaa"/><rect x="1737" y="975" width="19" height="19" fill="#fff6d4"/><rect x="1756" y="975" width="20" height="19" fill="#28220b"/><rect x="1776" y="975" width="19" height="19" fill="#504416"/><rect x="1795" y="975" width="19" height="19" fill="#786721"/><rect x="1814" y="975" width="19" height="19" fill="#a0892c"/><rect x="1833" y="975" width="19" height="19" fill="#c8ab37"/><rect x="1852" y="975" width="19" height="19" fill="#d3bc5f"/><rect x="1871" y="975" width="19" height="19" fill="#decd87"/></svg>
<div class="a" style="left:0;top:994px;width:1890px;height:14px;background:#cecece"></div>
<div class="a" style="left:4px;top:998px;width:427px;height:8px;border-radius:4px;background:#7c8083"></div>
<svg style="left:0;top:0" width="1" height="1"><path d="M1912 986V998L1906 992Z" fill="#2e3436"/></svg>
<div class="txt" style="left:20px;top:1012px;font-size:11px">フィル:</div>
<div class="txt" style="left:2px;top:1028px;font-size:11px;letter-spacing:0.5px">ストローク:</div>
<div class="txt" style="left:69px;top:1012px;font-size:11px;letter-spacing:2.5px">該当なし</div>
<div class="txt" style="left:69px;top:1028px;font-size:11px;letter-spacing:2.5px">該当なし</div>
<div class="txt" style="left:159px;top:1020px;font-size:11px">O:</div>
<div class="ent" style="left:173px;top:1010px;width:68px;height:33px"></div>
<div class="a" style="left:206px;top:1011px;width:1px;height:31px;background:#e6e3e0"></div>
<div class="a" style="left:223px;top:1011px;width:1px;height:31px;background:#e6e3e0"></div>
<div class="txt" style="left:177px;top:1019px;font-size:11px;color:#a9a9a9">100</div>
<svg style="left:0;top:0" width="1" height="1"><g stroke="#c8c8c8" stroke-width="1.3"><line x1="209.5" y1="1026.5" x2="219.5" y2="1026.5"/><line x1="227.0" y1="1026.5" x2="237.0" y2="1026.5"/><line x1="232.0" y1="1021.5" x2="232.0" y2="1031.5"/></g></svg>
<div class="sep" style="left:252px;top:1010px;width:1px;height:34px"></div>
<div class="a" style="left:326px;top:1010px;width:76px;height:33px;border:1px solid #d3cfcb;border-radius:5px;background:linear-gradient(#f8f7f6,#edebe9)"></div>
<div class="txt" style="left:338px;top:1020px;font-size:10px;font-weight:bold;letter-spacing:-0.6px;color:#2e3436">•Layer 1</div>
<svg style="left:0;top:0" width="1" height="1"><path d="M379 1024H391L385 1030Z" fill="#2e3436"/></svg>
<div class="txt" id="msg" style="left:404px;top:1020px;font-size:12px;letter-spacing:0.06px;overflow:hidden;width:1190px">オブジェクトが選択されていません。オブジェクトをクリック、Shift+クリック、オブジェクト上でAlt+マウススクロール、または囲むようにドラッグして選択してください。</div>
<div class="sep" style="left:1599px;top:1010px;width:1px;height:34px"></div>
<div class="txt" style="left:1610px;top:1012px;font-size:11px">X:</div>
<div class="txt" style="left:1610px;top:1029px;font-size:11px">Y:</div>
<div class="txt" style="left:1630px;top:1012px;font-size:11px">11969.62</div>
<div class="txt" style="left:1630px;top:1029px;font-size:11px">11846.19</div>
<div class="txt" style="left:1685px;top:1020px;font-size:11px">Z:</div>
<div class="ent" style="left:1705px;top:1010px;width:88px;height:34px"></div>
<div class="a" style="left:1749px;top:1011px;width:1px;height:32px;background:#e6e3e0"></div>
<div class="a" style="left:1770px;top:1011px;width:1px;height:32px;background:#e6e3e0"></div>
<div class="txt" style="left:1705px;top:1020px;width:44px;text-align:center;font-size:11px;color:#2e3436">200%</div>
<svg style="left:0;top:0" width="1" height="1"><g stroke="#2e3436" stroke-width="1.3"><line x1="1754.5" y1="1027.0" x2="1764.5" y2="1027.0"/><line x1="1776.5" y1="1027.0" x2="1786.5" y2="1027.0"/><line x1="1781.5" y1="1022.0" x2="1781.5" y2="1032.0"/></g></svg>
<div class="txt" style="left:1803px;top:1020px;font-size:11px">R:</div>
<div class="ent" style="left:1824px;top:1010px;width:93px;height:34px"></div>
<div class="a" style="left:1873px;top:1011px;width:1px;height:32px;background:#e6e3e0"></div>
<div class="a" style="left:1894px;top:1011px;width:1px;height:32px;background:#e6e3e0"></div>
<div class="txt" style="left:1824px;top:1020px;width:49px;text-align:center;font-size:11px;color:#2e3436">0.00°</div>
<svg style="left:0;top:0" width="1" height="1"><g stroke="#2e3436" stroke-width="1.3"><line x1="1878.5" y1="1027.0" x2="1888.5" y2="1027.0"/><line x1="1900.5" y1="1027.0" x2="1910.5" y2="1027.0"/><line x1="1905.5" y1="1022.0" x2="1905.5" y2="1032.0"/></g></svg>
<svg style="left:0;top:0" width="1928" height="1044"><g transform="translate(2 3)"><path d="M7.5 0.5L14.5 7.5L11 8.5L12 10.5L9 10L9.5 12.5L6 11L5 12.5L3.5 10L0.5 7.5Z" fill="#111"/><path d="M7.5 2L11 5.5L7.5 7L4 5.5Z" fill="#555"/><circle cx="3" cy="13.5" r="1" fill="#111"/><circle cx="12" cy="13" r="0.9" fill="#111"/><circle cx="7.5" cy="14.5" r="1.1" fill="#111"/></g><path d="M15.5 60.5H23.5L26.5 63.5V75.5H15.5Z" fill="#fdfdfd" stroke="#b9bdb6"/><circle cx="26.5" cy="68.6" r="3.7" fill="#2f62a8"/><path d="M24.3 68.6H28.7M26.5 66.4V70.8" stroke="#fff" stroke-width="1.3"/><path d="M51.5 62.5Q51.5 61.3 52.7 61.3H56.8L58.3 63H65.3Q66.6 63 66.6 64.3V74.8Q66.6 76 65.3 76H52.7Q51.5 76 51.5 74.8Z" fill="#c9b089"/><rect x="54.3" y="64.3" width="9.5" height="6" fill="#f4f4f4" stroke="#8f8f8f" stroke-width="0.8"/><path d="M51.5 70.5L66.6 69.2V74.8Q66.6 76 65.3 76H52.7Q51.5 76 51.5 74.8Z" fill="#e8d8be"/><path d="M95 60.6H98V66.3H100.8L96.5 70.3L92.2 66.3H95Z" fill="#fff" stroke="#8c8c8c" stroke-width="1"/><rect x="90.3" y="70" width="12" height="6" rx="0.6" fill="#3a76c6"/><rect x="93.8" y="71.6" width="5.4" height="1.6" fill="#e4ebf5"/><rect x="125.6" y="60.6" width="16" height="10.5" rx="2.2" fill="#3a3d3f"/><rect x="128" y="62.2" width="11" height="3.6" fill="#e0e0e0"/><rect x="129.5" y="62.8" width="6" height="1.3" fill="#333"/><rect x="127.3" y="69" width="12.6" height="7" rx="1.2" fill="#3a3d3f"/><rect x="129" y="69.8" width="9.2" height="4.6" fill="#d6eccb"/><path d="M181.4 60.4H189.2L192.6 63.8V75.4H181.4Z" fill="#ecece9" stroke="#141414" stroke-width="1.3"/><path d="M189.2 60.4V63.8H192.6" fill="#fff" stroke="#141414" stroke-width="0.8"/><path d="M176.6 68.4H184" stroke="#141414" stroke-width="1.3"/><path d="M183.4 65.4L187 68.4L183.4 71.4Z" fill="#141414"/><path d="M214.4 60.4H222.2L225.6 63.8V75.4H214.4Z" fill="#ecece9" stroke="#141414" stroke-width="1.3"/><path d="M222.2 60.4V63.8H225.6" fill="#fff" stroke="#141414" stroke-width="0.8"/><path d="M219.8 68.4H227" stroke="#141414" stroke-width="1.3"/><path d="M226.6 65.4L230.2 68.4L226.6 71.4Z" fill="#141414"/><path d="M269.5 66.5H276Q280 66.5 280 70Q280 73.2 276 73.2H273" fill="none" stroke="#b39500" stroke-width="3.4" stroke-linecap="round"/><path d="M269.5 66.5H276Q280 66.5 280 70Q280 73.2 276 73.2H273" fill="none" stroke="#edd21a" stroke-width="1.6" stroke-linecap="round"/><path d="M265 66.5L270.8 61.8V71.2Z" fill="#edd21a" stroke="#b39500" stroke-width="1"/><path d="M313.5 66.5H307Q303 66.5 303 70Q303 73.2 307 73.2H310" fill="none" stroke="#dbe7d2" stroke-width="3.4" stroke-linecap="round"/><path d="M318 66.5L312.2 61.8V71.2Z" fill="#dbe7d2"/><rect x="354" y="60.6" width="10" height="10" rx="1" fill="#fff" stroke="#9a9a9a" stroke-width="1.2"/><rect x="359" y="65.6" width="10" height="10" rx="1" fill="#fff" stroke="#9a9a9a" stroke-width="1.2"/><path d="M356 63.5H361M356 65.5H361M356 67.5H359M361 69H366M361 71H366M361 73H364" stroke="#b5b5b5" stroke-width="0.7"/><path d="M392 60.5L399.5 69.5M405.8 60.5L398.3 69.5" stroke="#8f8f8f" stroke-width="2.2"/><path d="M392 60.5L399.5 69.5M405.8 60.5L398.3 69.5" stroke="#e8e8e8" stroke-width="0.9"/><circle cx="394" cy="72.5" r="3.4" fill="#d3212b"/><circle cx="403.4" cy="72.5" r="3.4" fill="#d3212b"/><circle cx="394" cy="72.5" r="0.8" fill="#f0a0a0"/><circle cx="403.4" cy="72.5" r="0.8" fill="#f0a0a0"/><rect x="428.2" y="61.2" width="14.5" height="14.8" rx="1.2" fill="#d9a54a" stroke="#a8781f" stroke-width="0.8"/><rect x="432.5" y="60.4" width="5.5" height="3.8" rx="1" fill="#c8c8c8" stroke="#777" stroke-width="0.6"/><rect x="433.8" y="66" width="9.8" height="10" fill="#fafafa" stroke="#8a8a8a" stroke-width="0.9"/><path d="M435.5 68.5H441.5M435.5 70.5H441.5M435.5 72.5H439" stroke="#aaa" stroke-width="0.7"/><rect x="479.2" y="60.5" width="9.5" height="9.2" fill="#cfdcec" stroke="#2e3436" stroke-width="1.1"/><rect x="482.2" y="63.4" width="12.6" height="12.4" fill="#c9d8ea" stroke="#2e3436" stroke-width="1.3"/><rect x="516.0" y="60.5" width="9.5" height="9.2" fill="#cfdcec" stroke="#2e3436" stroke-width="1.1"/><rect x="519.0" y="63.4" width="12.6" height="12.4" fill="#c9d8ea" stroke="#2e3436" stroke-width="1.3"/><path d="M523.2 68.5V67.3Q523.2 65.3 525.3 65.3Q527.4 65.3 527.4 67.3V68.5" fill="none" stroke="#222" stroke-width="1"/><rect x="522.4" y="68.5" width="5.8" height="4.2" fill="#f3c623" stroke="#222" stroke-width="0.8"/><rect x="552.9" y="60.5" width="9.5" height="9.2" fill="#cfdcec" stroke="#2e3436" stroke-width="1.1"/><rect x="555.9" y="63.4" width="12.6" height="12.4" fill="#c9d8ea" stroke="#2e3436" stroke-width="1.3"/><path d="M560.1 68.5V67.3Q560.1 65.3 562.2 65.3Q564.3 65.3 564.3 67.3V68.5" fill="none" stroke="#222" stroke-width="1"/><rect x="559.3" y="68.5" width="5.8" height="4.2" fill="#7cc15a" stroke="#222" stroke-width="0.8"/><rect x="607.2" y="66.2" width="9.5" height="7.5" fill="#c7d6e8" stroke="#555" stroke-width="0.9"/><circle cx="615" cy="65.4" r="4.4" fill="#c7d6e8" stroke="#555" stroke-width="0.9"/><g fill="#111"><rect x="604.3" y="60.3" width="2" height="2"/><rect x="618.3" y="60.3" width="2" height="2"/><rect x="604.3" y="74.3" width="2" height="2"/><rect x="618.3" y="74.3" width="2" height="2"/></g><rect x="645" y="67.3" width="9.5" height="7.2" fill="#f2c833" stroke="#555" stroke-width="0.9"/><circle cx="652.5" cy="65.4" r="4.4" fill="#c7d6e8" stroke="#555" stroke-width="0.9"/><g fill="#111"><rect x="641.5" y="64.3" width="2" height="2"/><rect x="655.5" y="60.3" width="2" height="2"/><rect x="641.5" y="74.3" width="2" height="2"/><rect x="655.5" y="74.3" width="2" height="2"/><rect x="646" y="69" width="1.6" height="1.6"/><rect x="648.5" y="60.3" width="2" height="2"/></g><path d="M693.2 60.5H708.8V64L698 76H693.2Z" fill="#151515"/><path d="M695 62.3H706.8L696.6 73.6H695Z" fill="#fbfbfb"/><path d="M695 76L708.5 62.5" stroke="#333" stroke-width="3"/><path d="M697 75L708.5 63.5" stroke="#888" stroke-width="0.8"/><path d="M706 61.5L709.5 60.2L708.8 65.5Z" fill="#f2a900"/><text x="738" y="76" font-family="Liberation Serif" font-weight="bold" font-size="21" text-anchor="middle" fill="#111">T</text><g stroke="#3a3a3a" stroke-width="0.9"><path d="M767.5 70.8L771 68.5H781L783 71.0L779.5 73.3H769.5Z" fill="#d8d8d8"/><path d="M767.5 67.8L771 65.5H781L783 68.0L779.5 70.3H769.5Z" fill="#e6e6e6"/><path d="M767.5 64.8L771 62.5H781L783 65.0L779.5 67.3H769.5Z" fill="#f6f6f6"/></g><rect x="804.5" y="60.8" width="15.8" height="15" fill="#ededeb" stroke="#2e3436" stroke-width="1.2"/><rect x="805.3" y="61.5" width="14.2" height="2.2" fill="#8fb0d8"/><path d="M810.5 66.5L807.5 69.5L810.5 72.5M814.5 66.5L817.5 69.5L814.5 72.5" fill="none" stroke="#444" stroke-width="1.1"/><rect x="841.5" y="60.8" width="15.8" height="15" fill="#ededeb" stroke="#2e3436" stroke-width="1.2"/><rect x="842.3" y="61.5" width="14.2" height="2.2" fill="#8fb0d8"/><path d="M847 66Q845.5 66 845.5 67.5V69L844.5 69.5L845.5 70V71.5Q845.5 73 847 73M852 66Q853.5 66 853.5 67.5V69L854.5 69.5L853.5 70V71.5Q853.5 73 852 73" fill="none" stroke="#444" stroke-width="0.9"/><rect x="878.5" y="60.3" width="1.3" height="15.8" fill="#d9323a"/><rect x="881" y="60.6" width="5.8" height="3.8" fill="#b9cde4" stroke="#6f8fb6" stroke-width="0.7"/><rect x="881" y="66.2" width="13.8" height="3.8" fill="#b9cde4" stroke="#6f8fb6" stroke-width="0.7"/><rect x="881" y="71.8" width="11" height="3.8" fill="#b9cde4" stroke="#6f8fb6" stroke-width="0.7"/><path d="M931.5 60.5H941L944.5 64V76H931.5Z" fill="#f7f7f7" stroke="#dcdcdc"/><path d="M935 72L939 68M938.5 66.5A2 2 0 1 0 941 69" fill="none" stroke="#cfcfcf" stroke-width="1.2"/><path d="M968.5 62L981.5 75" stroke="#8a8a8a" stroke-width="2.4"/><path d="M966.8 63.5A2.6 2.6 0 1 0 970 60.3" fill="none" stroke="#8a8a8a" stroke-width="1.6"/><path d="M983.2 73.5A2.6 2.6 0 1 0 980 76.7" fill="none" stroke="#8a8a8a" stroke-width="1.6"/><path d="M976 66L982 60" stroke="#9a9a9a" stroke-width="1.6"/><path d="M968 75L974.5 68.5" stroke="#3465a4" stroke-width="3.2" stroke-linecap="round"/><path d="M16.5 102.8H25L27.3 105.2V118.2H16.5Z" fill="#fff" stroke="#c5c8c2"/><rect x="17.5" y="104" width="8.5" height="13.2" fill="#a9c3e2"/><rect x="18.5" y="114" width="2.5" height="2" fill="#8a8a6a"/><rect x="23.3" y="114.3" width="3.6" height="4" fill="#111"/><path d="M18 106H24M18 108H24M18 110H24" stroke="#93add0" stroke-width="0.7"/><rect x="51.5" y="102.6" width="15.6" height="15.8" fill="none" stroke="#111" stroke-width="1.4" stroke-dasharray="1.6 1.2"/><g stroke="#555" stroke-width="0.8"><path d="M54 113L56 111.5H64L62 113L64 114.5H56Z" fill="#ddd"/><path d="M54 110L56 108.5H64L62 110L64 111.5H56Z" fill="#e8e8e8"/><path d="M54 107L56 105.5H64L62 107L64 108.5H56Z" fill="#f5f5f5"/></g><rect x="88.5" y="102.6" width="15.6" height="15.8" fill="none" stroke="#f2c2c2" stroke-width="1" stroke-dasharray="1.2 1.4"/><path d="M90.5 108.5H97V116.5H90.5Z" fill="#f6ecc6" stroke="#dedede" stroke-width="0.8"/><circle cx="98.5" cy="108" r="4.6" fill="#eef0f2" stroke="#dcdcdc" stroke-width="0.8"/><rect x="126.7" y="106.8" width="10.5" height="10.2" fill="none" stroke="#222" stroke-width="1.2" stroke-dasharray="1.5 1.5"/><rect x="135" y="103.2" width="5.8" height="5.6" fill="#2e3436"/><path d="M191 103.5Q183.5 103.5 183.5 111" fill="none" stroke="#f0dcc6" stroke-width="3.6"/><path d="M178.5 110L183.5 117.5L188.5 110Z" fill="#f0dcc6"/><path d="M214 103.5Q221.5 103.5 221.5 111" fill="none" stroke="#f0dcc6" stroke-width="3.6"/><path d="M216.5 110L221.5 117.5L226.5 110Z" fill="#f0dcc6"/><path d="M255 110H264" stroke="#f0dcc6" stroke-width="3.2"/><path d="M251 110L256.5 104.5V115.5Z M268 110L262.5 104.5V115.5Z" fill="#f0dcc6"/><path d="M297 106V114" stroke="#f0dcc6" stroke-width="3.2"/><path d="M297 101.5L291.5 107H302.5Z M297 118.5L291.5 113H302.5Z" fill="#f0dcc6"/><g fill="#e3e3e3"><rect x="339.5" y="102.5" width="16" height="2.2"/><rect x="339.5" y="106.5" width="6" height="1.6"/><rect x="339.5" y="109.5" width="6" height="1.6"/><rect x="339.5" y="112.5" width="6" height="1.6"/><rect x="339.5" y="115.5" width="6" height="1.6"/><rect x="351.3" y="107" width="1" height="10"/></g><g fill="#e3e3e3"><rect x="376.5" y="102.5" width="6" height="1.6"/><rect x="376.5" y="105.5" width="15.5" height="2.4"/><rect x="376.5" y="109.5" width="6" height="1.6"/><rect x="376.5" y="112.5" width="6" height="1.6"/><rect x="376.5" y="115.5" width="6" height="1.6"/></g><g fill="#e3e3e3"><rect x="424.5" y="102.5" width="6" height="1.6"/><rect x="424.5" y="105.5" width="6" height="1.6"/><rect x="413.5" y="111" width="16" height="2.4" fill="#efe9d6"/><rect x="424.5" y="108.5" width="6" height="1.6"/><rect x="424.5" y="115.5" width="6" height="1.6"/></g><g fill="#e3e3e3"><rect x="461.5" y="102.5" width="6" height="1.6"/><rect x="461.5" y="105.5" width="6" height="1.6"/><rect x="461.5" y="108.5" width="6" height="1.6"/><rect x="461.5" y="111.5" width="6" height="1.6"/><rect x="450.5" y="115.5" width="16" height="2.4" fill="#efe9d6"/><rect x="454.5" y="102.5" width="1" height="10"/></g><path d="M884.5 104.5Q884.5 101.5 887.5 101.5Q890.5 101.5 890.5 104.5V107" fill="none" stroke="#111" stroke-width="1.3"/><rect x="882.8" y="107.2" width="9.4" height="8.5" rx="1" fill="#f0d040" stroke="#111" stroke-width="1"/><circle cx="887.5" cy="111" r="1" fill="#111"/><path d="M1127.5 104.5H1142.5 V109" fill="none" stroke="#111" stroke-width="2.2"/><path d="M1127.5 108.5H1139.5 V111" fill="none" stroke="#111" stroke-width="1"/><path d="M1130.5 114.5H1138.5" stroke="#111" stroke-width="1.2" stroke-dasharray="1.6 1.2"/><path d="M1138.5 112L1142.0 114.5L1138.5 117Z" fill="#111"/><path d="M1164.5 104.5H1174Q1180 104.5 1181 111" fill="none" stroke="#111" stroke-width="1.3"/><path d="M1164.5 108H1172Q1176 108 1177 111" fill="none" stroke="#111" stroke-width="1.1"/><path d="M1167 114.5H1175" stroke="#111" stroke-width="1.2" stroke-dasharray="1.6 1.2"/><path d="M1175 112L1178.5 114.5L1175 117Z" fill="#111"/><path d="M1202 104.5H1217V109" fill="none" stroke="#1a1a1a" stroke-width="2.2"/><rect x="1202" y="106" width="12" height="3" fill="#9dbbe0"/><path d="M1205 114.5H1213" stroke="#111" stroke-width="1.2" stroke-dasharray="1.6 1.2"/><path d="M1213 112L1216.5 114.5L1213 117Z" fill="#111"/><path d="M1240 104.5H1255" stroke="#111" stroke-width="2"/><path d="M1241 106V108M1245 106V108M1249 106V108M1253 106V108" stroke="#111" stroke-width="1.4"/><circle cx="1243" cy="108.3" r="1.2" fill="#111"/><circle cx="1247" cy="108.3" r="1.2" fill="#111"/><circle cx="1251" cy="108.3" r="1.2" fill="#111"/><path d="M1242 114.5H1250" stroke="#111" stroke-width="1.2" stroke-dasharray="1.6 1.2"/><path d="M1250 112L1253.5 114.5L1250 117Z" fill="#111"/><path d="M19 141.5V158.3L22.6 154.8L25.6 161.2L28.2 160L25.3 153.7H30.2Z" fill="#000" stroke="#fff" stroke-width="1"/><path d="M15.5 194Q15.5 185 19.5 180.5Q24 176.5 33 176.2" fill="none" stroke="#888" stroke-width="1.1"/><rect x="16.8" y="177.2" width="6" height="6" fill="#4f5fe8" stroke="#1a1aff" stroke-width="1.3"/><rect x="32" y="173.8" width="4.6" height="4.6" fill="#c8ccff" stroke="#6f78ff" stroke-width="1"/><rect x="13.3" y="193.3" width="4.4" height="4.4" fill="#c8ccff" stroke="#6f78ff" stroke-width="1"/><path d="M22.3 183.3L33.5 191.2L28.5 193.2Z" fill="#000"/><defs><linearGradient id="gr1" x1="0" y1="0" x2="1" y2="1"><stop offset="0" stop-color="#f4f7fb"/><stop offset="1" stop-color="#9fb8d4"/></linearGradient><linearGradient id="gp1" x1="0" y1="0" x2="1" y2="1"><stop offset="0" stop-color="#fff"/><stop offset="1" stop-color="#ff9aa4"/></linearGradient><linearGradient id="gg1" x1="0" y1="0" x2="1" y2="1"><stop offset="0" stop-color="#fff"/><stop offset="1" stop-color="#3fae4a"/></linearGradient><linearGradient id="gy1" x1="0" y1="0" x2="1" y2="1"><stop offset="0" stop-color="#fff7c4"/><stop offset="1" stop-color="#f0d848"/></linearGradient><linearGradient id="gb1" x1="0" y1="0" x2="1" y2="1"><stop offset="0" stop-color="#dfe0f5"/><stop offset="1" stop-color="#4b4ea0"/></linearGradient></defs><rect x="15.8" y="224.6" width="18.6" height="18.2" fill="url(#gr1)" stroke="#111" stroke-width="1.5"/><circle cx="25" cy="268" r="9.3" fill="url(#gp1)" stroke="#111" stroke-width="1.4"/><path d="M19 291.5L25 296L23 306H16.5L13.5 298Z" fill="url(#gy1)" stroke="#111" stroke-width="1.1"/><path d="M28 296.5L30.3 302L36.3 302.5L31.8 306.3L33.3 312.3L28 309L22.7 312.3L24.2 306.3L19.7 302.5L25.7 302Z" fill="url(#gy1)" stroke="#111" stroke-width="1.1"/><path d="M25 324.5L35.5 329.5V342L25 347.5L15.3 342V329.5Z" fill="url(#gb1)" stroke="#3a3a3a" stroke-width="1.2"/><path d="M26 331.5L35 329.8V341.5L26 340Z" fill="#e6e6fb"/><path d="M16 341.5L26 340L35 341.8L25 347Z" fill="#3a3d8a"/><path d="M31.6 379.8Q35.5 374 34.5 368Q32.5 360 25 359.5Q16 360 14.6 369Q14.2 378 22.5 380Q29.5 380.5 30.8 373.5Q31.5 366.5 25 365Q19.5 365 19.5 370.5Q20 375 24 375Q27 374.5 26.5 371" fill="none" stroke="#222" stroke-width="1.5"/><path d="M16 407H25Q18.5 410 21 416Q23 423 17 428.5" fill="none" stroke="#333" stroke-width="1.2"/><rect x="14" y="426" width="4.5" height="4" fill="#fff" stroke="#111" stroke-width="1"/><path d="M18.5 428H26" stroke="#111" stroke-width="1"/><circle cx="26.5" cy="428" r="1" fill="#111"/><path d="M26.3 427.5L32.5 417" stroke="#222" stroke-width="1.6"/><path d="M29.5 416L34.5 418.5L33 421.5L28.5 419.5Z" fill="#e8b62e" stroke="#444" stroke-width="0.6"/><path d="M31 407L37 410L34.5 418.5L29.5 416Z" fill="#6f9fc8" stroke="#333" stroke-width="0.8"/><path d="M20 440.5L18 446L20.5 447L17.5 453Q19.5 464 26 463.5Q33 461 35 452" fill="none" stroke="#333" stroke-width="1.1"/><path d="M24.5 461L26.5 452L31.5 444L36 447L32 455Z" fill="#fde6a0" stroke="#333" stroke-width="0.8"/><path d="M28.5 448L32.5 441L37 444L33 451Z" fill="#f5b400" stroke="#555" stroke-width="0.8"/><path d="M24.5 461L25.5 457L27.5 458.5Z" fill="#111"/><path d="M14 476Q19 474 22 476Q17 481 19 488Q20 494 24 496Q20 497.5 17 495Q12.5 490 14 484Z" fill="#111"/><path d="M22 497Q30 494 36 495" fill="none" stroke="#111" stroke-width="1.2"/><path d="M25 493L27 484L32 481L34 485L30 491Z" fill="#f5c518" stroke="#333" stroke-width="0.8"/><path d="M30 480L33 476L38 478L34.5 484Z" fill="#6a9cc5" stroke="#333" stroke-width="0.8"/><path d="M31 482L35 483" stroke="#d11" stroke-width="1.4"/><text x="23.5" y="531.5" font-family="Liberation Sans" font-weight="bold" font-size="25" text-anchor="middle" fill="#111">A</text><path d="M33 510.5H36.5M34.8 510.5V531.5M33 531.5H36.5" stroke="#111" stroke-width="0.9"/><rect x="14.3" y="558" width="21.5" height="21.5" fill="url(#gg1)"/><path d="M18.4 563.4L31.2 574.2" stroke="#333" stroke-width="1"/><rect x="16.2" y="561.2" width="4.4" height="4.4" fill="#fff" stroke="#222" stroke-width="1.2"/><rect x="29" y="572" width="4.4" height="4.4" fill="#fff" stroke="#222" stroke-width="1.2"/><path d="M17.3 595.6Q25 598 32.5 595.6Q30 603 32.5 610.7Q25 608 17.3 610.7Q20 603 17.3 595.6Z" fill="#5aa8a0" stroke="#555" stroke-width="0.6"/><g fill="#fff" stroke="#111" stroke-width="1.2"><rect x="15.1" y="593.4" width="4.4" height="4.4"/><rect x="30.3" y="593.4" width="4.4" height="4.4"/><rect x="15.1" y="608.5" width="4.4" height="4.4"/><rect x="30.3" y="608.5" width="4.4" height="4.4"/></g><path d="M19 646L30 633" stroke="#3d5d7a" stroke-width="2.4"/><path d="M19 646L30 633" stroke="#b5cde6" stroke-width="1"/><path d="M27.5 632L32 636.5L35 634Q37.5 631 35.5 628.5Q33 626 30 628.5Z" fill="#111"/><path d="M18.4 645Q16.5 648.5 18.4 649.5Q20.3 648.5 18.4 645Z" fill="#6a9cc5" stroke="#334" stroke-width="0.5"/><ellipse cx="25.5" cy="681.5" rx="10.5" ry="2.5" fill="#8fd08a" stroke="#2c6a2c" stroke-width="0.8"/><path d="M22 669V681" stroke="#4a9a4a" stroke-width="1.5"/><path d="M20.5 670L27.5 661L36 664L33.5 675L25.5 677.5Z" fill="#5b95c4" stroke="#222" stroke-width="1"/><path d="M20 670Q20.5 667 23 668L25.5 677.5Q22 678 20 670Z" fill="#3ca63a"/><path d="M22.5 667V660Q22.5 657 24.5 659L26.5 668" fill="none" stroke="#333" stroke-width="0.9"/><path d="M13.2 731.5V721Q17 721 19.5 716Q22.5 709 28 708.5Q34 708.5 33.5 713Q33 716.5 29.5 715.5Q28 713.5 29.5 712.5Q25 711.5 25 718Q25.5 722 34.8 721.5V731.5Z" fill="#a8a8a8" stroke="#555" stroke-width="0.8"/><g fill="#111"><circle cx="15.5" cy="744.5" r="1.1"/><circle cx="18.5" cy="746" r="0.9"/><circle cx="15" cy="748.5" r="1.1"/><circle cx="21" cy="749" r="0.9"/><circle cx="17.5" cy="751.5" r="0.9"/><circle cx="16" cy="755" r="1.1"/></g><path d="M25 752L29.5 748L36 752.5L36.8 764.5L30 765L24.5 758Z" fill="#4cae2e" stroke="#2a5a1a" stroke-width="0.9"/><path d="M27 749L29.5 744.5L32 745.5L31.5 749.5Z" fill="#fff" stroke="#333" stroke-width="0.8"/><defs><linearGradient id="ger" x1="0" y1="0" x2="0" y2="1"><stop offset="0" stop-color="#f7c2a8"/><stop offset="1" stop-color="#e88a78"/></linearGradient></defs><path d="M27.8 776.3L35.5 781.8L27.7 792.1L20 786.6Z" fill="url(#ger)" stroke="#222" stroke-width="1"/><path d="M20 786.6L27.7 792.1L22.5 799L14.8 793.5Z" fill="#2424e8" stroke="#111" stroke-width="1"/><path d="M12.5 798.5H18.5M26 798.5H37" stroke="#111" stroke-width="1.2"/><path d="M18 817V826M21 813H28Q31 813 31 817V826M20.5 826L23 821M27 821L31 826" fill="none" stroke="#222" stroke-width="1"/><rect x="19.5" y="809.8" width="6.5" height="6" fill="#b8d0ea" stroke="#222" stroke-width="1"/><rect x="22.5" y="818.5" width="6.5" height="4.5" fill="#f5cc30" stroke="#555" stroke-width="0.8"/><rect x="13.5" y="826.8" width="7" height="6.5" fill="#b8d0ea" stroke="#222" stroke-width="1"/><rect x="28" y="826.8" width="7" height="6.5" fill="#b8d0ea" stroke="#222" stroke-width="1"/><path d="M27.5 873L34.5 880.5" stroke="#333" stroke-width="4.2" stroke-linecap="round"/><path d="M28.5 874L34 879.8" stroke="#f0b030" stroke-width="2.4" stroke-linecap="round"/><circle cx="21.5" cy="866" r="7.3" fill="#d8e6f4" stroke="#333" stroke-width="1.6"/><path d="M15.5 897.5L27 891L36 907.5L24.5 914Z" fill="#f5c6b3" stroke="#222" stroke-width="1.1"/><path d="M19 898L21 897M20.5 900.5L23.5 899M22 903L24 902M23.5 905.5L26.5 904M25 908L27 907" stroke="#555" stroke-width="0.7"/><defs><linearGradient id="glk" x1="0" y1="0" x2="0" y2="1"><stop offset="0" stop-color="#e07a10"/><stop offset="1" stop-color="#f8e060"/></linearGradient></defs><path d="M58.5 143V140.5Q58.5 136.3 62.3 136.3Q66.1 136.3 66.1 140.5V143" fill="none" stroke="#2a2a2a" stroke-width="1.5"/><rect x="56.6" y="142.5" width="11.4" height="8.3" rx="1" fill="url(#glk)" stroke="#3a3a3a" stroke-width="0.8"/><path d="M62.3 145.2V148.3" stroke="#222" stroke-width="1.5"/><path d="M1902.0 149.0 L1907.5 154.5" stroke="#111" stroke-width="1.3"/><path d="M1909.0 156.0 L1905.3 155.3 L1908.3 152.3 Z" fill="#111"/><path d="M1899.5 144.0 l2.8 2.8 l-2.8 2.8 l-2.8 -2.8Z" fill="#c8c8ff" stroke="#2a2aff" stroke-width="1.3"/><path d="M1909.5 154.0 l2.8 2.8 l-2.8 2.8 l-2.8 -2.8Z" fill="#c8e0c8" stroke="#2f8a2f" stroke-width="1.3"/><path d="M1902.0 198.0 L1907.5 203.5" stroke="#111" stroke-width="1.3"/><path d="M1909.0 205.0 L1905.3 204.3 L1908.3 201.3 Z" fill="#111"/><path d="M1899.5 193.0 l2.8 2.8 l-2.8 2.8 l-2.8 -2.8Z" fill="#c8c8ff" stroke="#2a2aff" stroke-width="1.3"/><path d="M1909.5 203.0 l2.8 2.8 l-2.8 2.8 l-2.8 -2.8Z" fill="#c8e0c8" stroke="#2f8a2f" stroke-width="1.3"/><path d="M1902.0 388.0 L1907.5 393.5" stroke="#111" stroke-width="1.3"/><path d="M1909.0 395.0 L1905.3 394.3 L1908.3 391.3 Z" fill="#111"/><path d="M1899.5 383.0 l2.8 2.8 l-2.8 2.8 l-2.8 -2.8Z" fill="#c8c8ff" stroke="#2a2aff" stroke-width="1.3"/><path d="M1909.5 393.0 l2.8 2.8 l-2.8 2.8 l-2.8 -2.8Z" fill="#c8e0c8" stroke="#2f8a2f" stroke-width="1.3"/><path d="M1902.0 613.0 L1907.5 618.5" stroke="#111" stroke-width="1.3"/><path d="M1909.0 620.0 L1905.3 619.3 L1908.3 616.3 Z" fill="#111"/><path d="M1899.5 608.0 l2.8 2.8 l-2.8 2.8 l-2.8 -2.8Z" fill="#c8c8ff" stroke="#2a2aff" stroke-width="1.3"/><path d="M1909.5 618.0 l2.8 2.8 l-2.8 2.8 l-2.8 -2.8Z" fill="#c8e0c8" stroke="#2f8a2f" stroke-width="1.3"/><path d="M1899 242.5H1911V229" fill="none" stroke="#cfe3cc" stroke-width="1" stroke-dasharray="1.5 1"/><path d="M1898 277.5H1905M1910.5 264V272" fill="none" stroke="#d2d2d2" stroke-width="1" stroke-dasharray="1.5 1"/><path d="M1910.5 274l2.5 2.5l-2.5 2.5l-2.5 -2.5Z" fill="#eef3ee" stroke="#cfe0cf" stroke-width="0.9"/><path d="M1898 313.5H1911V306" fill="none" stroke="#d2d2d2" stroke-width="1" stroke-dasharray="1.5 1"/><path d="M1911 299l2.2 2.5l-2.2 2.5l-2.2 -2.5Z" fill="#eef3ee" stroke="#cfe0cf" stroke-width="0.9"/><path d="M1898 347.5H1911V334" fill="none" stroke="#d8d8d8" stroke-width="1" stroke-dasharray="1.5 1"/><circle cx="1901.5" cy="338" r="1.7" fill="none" stroke="#cfe0cf" stroke-width="0.9"/><path d="M1899 420Q1907 421 1907 426Q1907 430 1904 432.5Q1908 433 1913 430" fill="none" stroke="#2a8a2a" stroke-width="1.6"/><path d="M1898 467L1913 455M1899 459L1912 464" stroke="#444" stroke-width="1"/><path d="M1905.5 458.5l2.5 2.5l-2.5 2.5l-2.5 -2.5Z" fill="#c8e0c8" stroke="#2f8a2f" stroke-width="1.2"/><path d="M1899 490Q1906 490 1907 496Q1908 500 1913 497" fill="none" stroke="#444" stroke-width="1"/><path d="M1905.5 497l2.8 2.8l-2.8 2.8l-2.8 -2.8Z" fill="#c8e0c8" stroke="#2f8a2f" stroke-width="1.3"/><path d="M1898 525Q1903 524 1907 527Q1913 533 1909 538" fill="none" stroke="#444" stroke-width="1"/><path d="M1905.5 524l2.5 2.5l-2.5 2.5l-2.5 -2.5Z" fill="#c8e0c8" stroke="#2f8a2f" stroke-width="1.2"/><path d="M1898 572L1902 562M1908 569L1912 559" stroke="#d42020" stroke-width="1.1"/><path d="M1897 569L1913 561" stroke="#444" stroke-width="0.9"/><path d="M1905.5 563l2.5 2.5l-2.5 2.5l-2.5 -2.5Z" fill="#c8e0c8" stroke="#2f8a2f" stroke-width="1.2"/><path d="M1898 655.5H1911V643" fill="none" stroke="#555" stroke-width="1"/><circle cx="1903" cy="648.5" r="1.8" fill="#9ad09a" stroke="#2f8a2f" stroke-width="0.9"/><path d="M1898 691.5H1911V678" fill="none" stroke="#555" stroke-width="1" stroke-dasharray="1.5 1"/><path d="M1899.5 684H1905.5M1902.5 681V687" stroke="#222" stroke-width="1.1"/><text x="1907" y="729" font-family="Liberation Sans" font-weight="bold" font-size="16" text-anchor="middle" fill="#111">A</text><path d="M1900.5 729.5H1912" stroke="#2f8a2f" stroke-width="1"/><path d="M1900.5 726.5l2.5 2.5l-2.5 2.5l-2.5 -2.5Z" fill="#c8e0c8" stroke="#2f8a2f" stroke-width="1.1"/><defs><linearGradient id="gpg" x1="0" y1="0" x2="1" y2="1"><stop offset="0" stop-color="#fff"/><stop offset="1" stop-color="#999"/></linearGradient></defs><rect x="1899.5" y="763.5" width="11" height="14" rx="1" fill="url(#gpg)" stroke="#222" stroke-width="1.3"/><path d="M1898 798.5H1913M1898 802.5H1913M1898 806.5H1913M1898 810.5H1913M1899.5 797V812M1903.5 797V812M1907.5 797V812M1911.5 797V812" stroke="#1515e0" stroke-width="1.2"/><path d="M1900 832V848M1910 832V848M1903 848L1907 832" stroke="#1515e0" stroke-width="1.6"/><path d="M263 1026Q271 1017 279 1026Q271 1034 263 1026Z" fill="#fff" stroke="#111" stroke-width="1.6"/><circle cx="271" cy="1026" r="3.3" fill="#111"/><path d="M265 1021L264 1019M268 1019.5L267.5 1017.5M271.5 1019V1017M275 1019.5L275.5 1017.5M278 1021L279 1019" stroke="#111" stroke-width="1.2"/><path d="M303 1022Q303 1017.5 306.5 1017.5Q310 1017.5 310 1021" fill="none" stroke="#111" stroke-width="1.4"/><rect x="301" y="1023.2" width="12.5" height="10" rx="1" fill="#f0d040" stroke="#111" stroke-width="1"/><circle cx="307" cy="1027.5" r="1.1" fill="#111"/></svg>
</body></html>
